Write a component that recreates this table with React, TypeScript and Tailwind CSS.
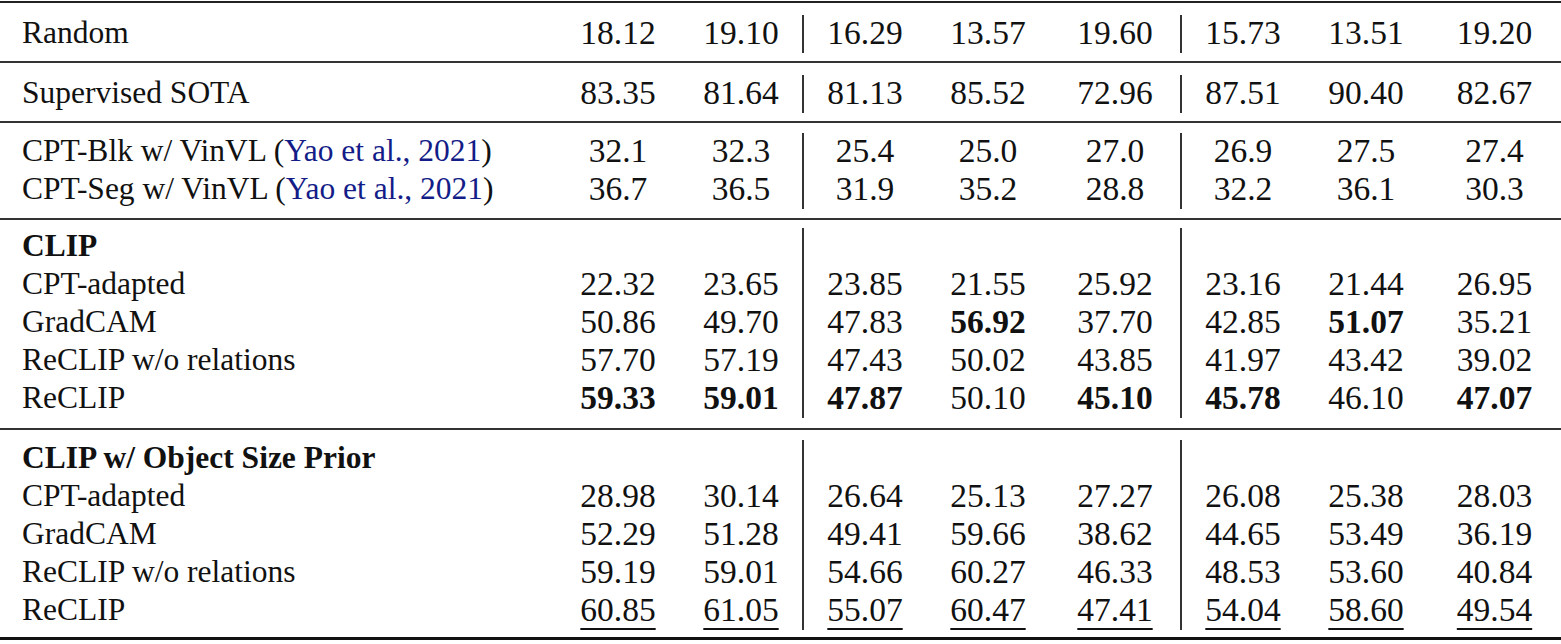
import React from "react";

type Row = { label: React.ReactNode; cells?: string[]; head?: boolean };

const grid =
  "grid grid-cols-[556px_124px_122px_124px_124px_130px_124px_124px_133px]";

// "*" = bold, "_" = underlined
const Cell = ({ v, i }: { v?: string; i: number }) => {
  const sep = i === 2 || i === 5 ? "border-l-2 border-[#333]" : "";
  let body: React.ReactNode = null;
  if (v) {
    if (v.startsWith("*")) body = <span className="font-bold">{v.slice(1)}</span>;
    else if (v.startsWith("_"))
      body = (
        <span className="underline decoration-[1.5px] underline-offset-[7px]">
          {v.slice(1)}
        </span>
      );
    else body = v;
  }
  return <div className={`h-[38px] text-center text-[33.5px] ${sep}`}>{body}</div>;
};

const Line = ({ row }: { row: Row }) => (
  <div className={grid}>
    <div className={`h-[38px] pl-[22px] ${row.head ? "font-bold" : ""}`}>{row.label}</div>
    {Array.from({ length: 8 }).map((_, i) => (
      <Cell key={i} v={row.cells?.[i]} i={i} />
    ))}
  </div>
);

const Cite = () => (
  <>
    (<span className="text-[#141c88]">Yao et al., 2021</span>)
  </>
);

const sections: { pad: string; rows: Row[] }[] = [
  {
    pad: "pt-[12px] pb-[8px]",
    rows: [
      { label: "Random", cells: ["18.12", "19.10", "16.29", "13.57", "19.60", "15.73", "13.51", "19.20"] },
    ],
  },
  {
    pad: "pt-[12px] pb-[8px]",
    rows: [
      { label: "Supervised SOTA", cells: ["83.35", "81.64", "81.13", "85.52", "72.96", "87.51", "90.40", "82.67"] },
    ],
  },
  {
    pad: "pt-[10px] pb-[9px]",
    rows: [
      { label: <>CPT-Blk w/ VinVL <Cite /></>, cells: ["32.1", "32.3", "25.4", "25.0", "27.0", "26.9", "27.5", "27.4"] },
      { label: <>CPT-Seg w/ VinVL <Cite /></>, cells: ["36.7", "36.5", "31.9", "35.2", "28.8", "32.2", "36.1", "30.3"] },
    ],
  },
  {
    pad: "pt-[8px] pb-[10px]",
    rows: [
      { label: "CLIP", head: true },
      { label: "CPT-adapted", cells: ["22.32", "23.65", "23.85", "21.55", "25.92", "23.16", "21.44", "26.95"] },
      { label: "GradCAM", cells: ["50.86", "49.70", "47.83", "*56.92", "37.70", "42.85", "*51.07", "35.21"] },
      { label: "ReCLIP w/o relations", cells: ["57.70", "57.19", "47.43", "50.02", "43.85", "41.97", "43.42", "39.02"] },
      { label: "ReCLIP", cells: ["*59.33", "*59.01", "*47.87", "50.10", "*45.10", "*45.78", "46.10", "*47.07"] },
    ],
  },
  {
    pad: "pt-[10px] pb-[7px]",
    rows: [
      { label: "CLIP w/ Object Size Prior", head: true },
      { label: "CPT-adapted", cells: ["28.98", "30.14", "26.64", "25.13", "27.27", "26.08", "25.38", "28.03"] },
      { label: "GradCAM", cells: ["52.29", "51.28", "49.41", "59.66", "38.62", "44.65", "53.49", "36.19"] },
      { label: "ReCLIP w/o relations", cells: ["59.19", "59.01", "54.66", "60.27", "46.33", "48.53", "53.60", "40.84"] },
      { label: "ReCLIP", cells: ["_60.85", "_61.05", "_55.07", "_60.47", "_47.41", "_54.04", "_58.60", "_49.54"] },
    ],
  },
];

export default function App() {
  return (
    <div className="w-[1561px] h-[644px] bg-white text-[#111] font-['Liberation_Serif','Times_New_Roman',serif] text-[31.5px] leading-[36px]">
      <div className="mt-[1px] h-[2px] bg-[#222]" />
      {sections.map((s, k) => (
        <React.Fragment key={k}>
          {k > 0 && <div className="h-[2px] bg-[#333]" />}
          <div className={s.pad}>
            {s.rows.map((r, j) => (
              <Line key={j} row={r} />
            ))}
          </div>
        </React.Fragment>
      ))}
      <div className="h-[3px] bg-[#111]" />
    </div>
  );
}
